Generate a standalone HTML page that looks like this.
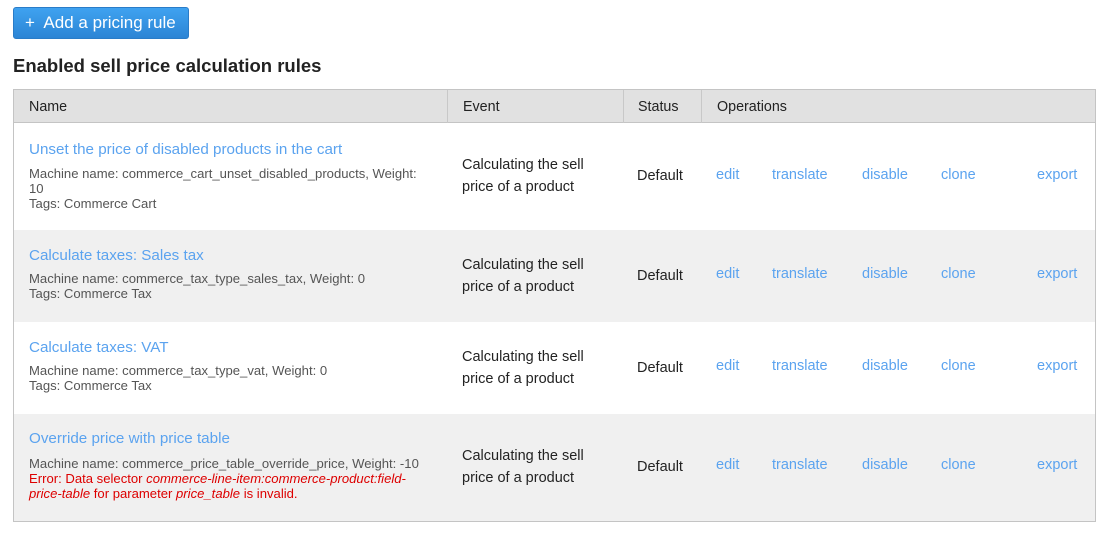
<!DOCTYPE html><html><head><style>
body{margin:0;width:1113px;height:538px;background:#fff;font-family:"Liberation Sans",sans-serif;position:relative;overflow:hidden}
.a{position:absolute;white-space:nowrap}
.btn{left:13px;top:7px;width:176px;height:32px;border-radius:3px;background:linear-gradient(#3fa2f0,#2c85d5);border:1px solid #2a7cc8;box-sizing:border-box;color:#fff;font-size:17px;line-height:30px;padding-left:11px}
h2{position:absolute;left:13px;top:55px;margin:0;font-size:18.5px;font-weight:bold;color:#222}
.tbl{position:absolute;left:13px;top:89px;width:1083px;height:433px;border:1px solid #c4c4c4;box-sizing:border-box}
.hd{position:absolute;left:0;top:0;width:100%;height:33px;background:#e1e1e1;border-bottom:1px solid #c4c4c4;box-sizing:border-box}
.sep{position:absolute;top:0;height:33px;border-left:1px solid #c8c8c8}
.th{font-size:14.3px;color:#222;top:9px}
.row{position:absolute;left:0;width:100%}
.t{font-size:15.2px;color:#5ba3ef}
.s{font-size:13.1px;color:#555;line-height:15px}
.e{font-size:14.5px;color:#222;line-height:22px}
.l{font-size:14.5px;color:#5ba3ef}
.err{color:#d00}
</style></head><body>
<div class="a btn">+&nbsp; Add a pricing rule</div>
<h2>Enabled sell price calculation rules</h2>
<div class="tbl">
<div class="hd">
<div class="sep" style="left:433px"></div><div class="sep" style="left:609px"></div><div class="sep" style="left:687px"></div>
<div class="a th" style="left:15px">Name</div><div class="a th" style="left:449px">Event</div><div class="a th" style="left:624px">Status</div><div class="a th" style="left:703px">Operations</div>
</div>

<div class="row" style="top:33px;height:108px;background:#fff">
<div class="a t" style="left:15px;top:18px">Unset the price of disabled products in the cart</div>
<div class="a s" style="left:15px;top:43px">Machine name: commerce_cart_unset_disabled_products, Weight:<br>10<br>Tags: Commerce Cart</div>
<div class="a e" style="left:448px;top:31px">Calculating the sell<br>price of a product</div>
<div class="a e" style="left:623px;top:42px">Default</div>
<div class="a l" style="left:702px;top:44px">edit</div><div class="a l" style="left:758px;top:44px">translate</div><div class="a l" style="left:848px;top:44px">disable</div><div class="a l" style="left:927px;top:44px">clone</div><div class="a l" style="left:1023px;top:44px">export</div>
</div>

<div class="row" style="top:140px;height:92px;background:#f0f0f0">
<div class="a t" style="left:15px;top:17px">Calculate taxes: Sales tax</div>
<div class="a s" style="left:15px;top:41px">Machine name: commerce_tax_type_sales_tax, Weight: 0<br>Tags: Commerce Tax</div>
<div class="a e" style="left:448px;top:24px">Calculating the sell<br>price of a product</div>
<div class="a e" style="left:623px;top:35px">Default</div>
<div class="a l" style="left:702px;top:36px">edit</div><div class="a l" style="left:758px;top:36px">translate</div><div class="a l" style="left:848px;top:36px">disable</div><div class="a l" style="left:927px;top:36px">clone</div><div class="a l" style="left:1023px;top:36px">export</div>
</div>

<div class="row" style="top:232px;height:92px;background:#fff">
<div class="a t" style="left:15px;top:17px">Calculate taxes: VAT</div>
<div class="a s" style="left:15px;top:41px">Machine name: commerce_tax_type_vat, Weight: 0<br>Tags: Commerce Tax</div>
<div class="a e" style="left:448px;top:24px">Calculating the sell<br>price of a product</div>
<div class="a e" style="left:623px;top:35px">Default</div>
<div class="a l" style="left:702px;top:36px">edit</div><div class="a l" style="left:758px;top:36px">translate</div><div class="a l" style="left:848px;top:36px">disable</div><div class="a l" style="left:927px;top:36px">clone</div><div class="a l" style="left:1023px;top:36px">export</div>
</div>

<div class="row" style="top:324px;height:107px;background:#f0f0f0">
<div class="a t" style="left:15px;top:16px">Override price with price table</div>
<div class="a s" style="left:15px;top:42px">Machine name: commerce_price_table_override_price, Weight: -10<br><span class="err">Error: Data selector <i>commerce-line-item:commerce-product:field-</i><br><i>price-table</i> for parameter <i>price_table</i> is invalid.</span></div>
<div class="a e" style="left:448px;top:31px">Calculating the sell<br>price of a product</div>
<div class="a e" style="left:623px;top:42px">Default</div>
<div class="a l" style="left:702px;top:43px">edit</div><div class="a l" style="left:758px;top:43px">translate</div><div class="a l" style="left:848px;top:43px">disable</div><div class="a l" style="left:927px;top:43px">clone</div><div class="a l" style="left:1023px;top:43px">export</div>
</div>
</div>
</body></html>
